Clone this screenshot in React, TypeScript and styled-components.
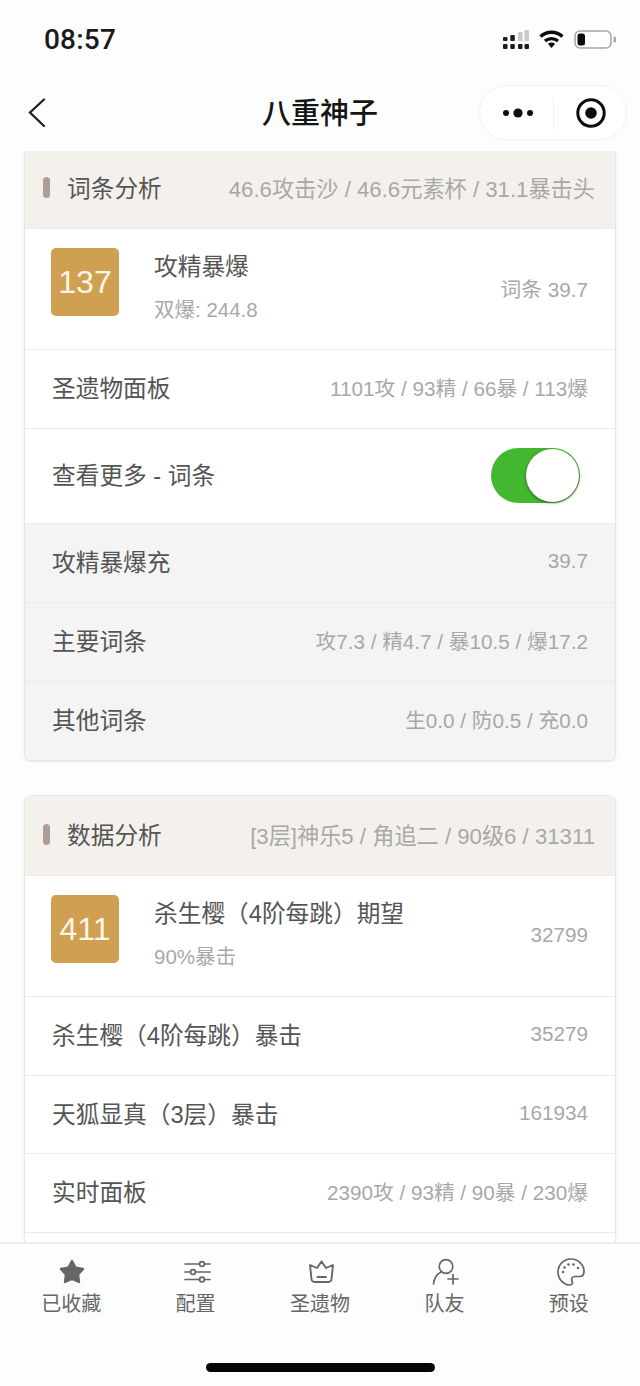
import React from "react";
import styled, { createGlobalStyle } from "styled-components";

const GlobalStyle = createGlobalStyle`
  html, body { margin: 0; padding: 0; background: #fdfdfd; }
  body { font-family: "Liberation Sans", "Noto Sans CJK SC", sans-serif; }
`;

const Screen = styled.div`
  width: 640px;
  height: 1386px;
  display: flex;
  flex-direction: column;
  overflow: hidden;
  background: #fdfdfd;
`;

const StatusBar = styled.div`
  height: 76px;
  flex: none;
  display: flex;
  align-items: center;
  justify-content: space-between;
  padding: 2px 0 0 44px;
  box-sizing: border-box;
`;

const Clock = styled.span`
  font-family: Roboto, sans-serif;
  font-size: 28px;
  font-weight: 500;
  color: #1a1a1a;
  letter-spacing: 0.2px;
`;

const StatusIcons = styled.div`
  display: flex;
  align-items: center;
  padding-right: 24px;
  gap: 10px;
`;

const NavBar = styled.div`
  height: 75px;
  flex: none;
  position: relative;
  display: flex;
  align-items: center;
  justify-content: space-between;
  padding: 0 13px 2px 24px;
  box-sizing: border-box;
`;

const NavTitle = styled.div`
  position: absolute;
  left: 0;
  right: 0;
  top: 17px;
  text-align: center;
  font-size: 29px;
  font-weight: 500;
  line-height: 42px;
  color: #151515;
`;

const Capsule = styled.div`
  width: 148px;
  height: 55px;
  box-sizing: border-box;
  border: 1px solid #f1f1f1;
  border-radius: 28px;
  background: #fff;
  display: flex;
  align-items: center;
  position: relative;
`;

const CapsuleHalf = styled.div`
  flex: 1 1 0;
  box-sizing: border-box;
  padding-left: 3px;
  display: flex;
  align-items: center;
  justify-content: center;
`;

const CapsuleDivider = styled.div`
  width: 1px;
  height: 32px;
  background: #eee;
`;

const Scroll = styled.div`
  flex: 1;
  min-height: 0;
  overflow: hidden;
  padding: 0 25px;
`;

const ScrollInner = styled.div`
  margin-top: -2px;
  display: flex;
  flex-direction: column;
  gap: 36px;
`;

const Card = styled.section`
  border-radius: 6px;
  background: #fff;
  box-shadow: 0 0 0 1px #e6e6e6, 0 1px 3px rgba(0, 0, 0, 0.18);
  overflow: hidden;
`;

const CardHeader = styled.header`
  height: 80px;
  box-sizing: border-box;
  background: #f4f1ed;
  border-bottom: 1px solid #eeeae6;
  display: flex;
  align-items: center;
  padding: 0 20px 4px 18px;
`;

const Marker = styled.span`
  width: 7px;
  height: 21px;
  border-radius: 4px;
  background: #b09d96;
  flex: none;
  margin: 2px 17px 0 0;
`;

const HeaderTitle = styled.span`
  font-size: 23.7px;
  color: #555;
  flex: none;
`;

const HeaderNote = styled.span`
  margin-left: auto;
  font-size: 22.2px;
  color: #a8a8a8;
  white-space: nowrap;
`;

const SummaryRow = styled.div`
  height: 121px;
  box-sizing: border-box;
  border-bottom: 1px solid #eee;
  display: flex;
  align-items: center;
  padding: 0 27px 4px 26px;
`;

const ScoreBadge = styled.div`
  width: 68px;
  height: 68px;
  border-radius: 5px;
  background: #cf9f52;
  color: #fdf6e6;
  font-size: 32px;
  display: flex;
  align-items: center;
  justify-content: center;
  flex: none;
  align-self: flex-start;
  margin: 19px 35px 0 0;
`;

const SummaryText = styled.div`
  display: flex;
  flex-direction: column;
  gap: 13px;
`;

const SummaryTitle = styled.span`
  font-size: 23.7px;
  line-height: 32px;
  color: #555;
`;

const SummarySub = styled.span`
  font-size: 20.5px;
  line-height: 28px;
  color: #a8a8a8;
`;

const Row = styled.div<{ $muted?: boolean; $height?: number }>`
  height: ${(p) => p.$height ?? 79}px;
  box-sizing: border-box;
  border-bottom: 1px solid #ececec;
  background: ${(p) => (p.$muted ? "#f4f4f4" : "#fff")};
  display: flex;
  align-items: center;
  justify-content: space-between;
  padding: 0 27px 4px;

  &:last-child {
    border-bottom: none;
  }
`;

const RowLabel = styled.span`
  font-size: 23.7px;
  color: #555;
`;

const RowValue = styled.span`
  font-size: 20.7px;
  color: #a8a8a8;
  white-space: nowrap;
`;

const SummaryValue = styled(RowValue)`
  margin-left: auto;
  position: relative;
  top: 1px;
`;

const Toggle = styled.div`
  width: 89px;
  height: 55px;
  border-radius: 28px;
  background: #43b72f;
  position: relative;
  margin: 2px 8px 0 0;
  flex: none;
`;

const ToggleKnob = styled.div`
  position: absolute;
  right: 1px;
  top: 1px;
  width: 53px;
  height: 53px;
  border-radius: 50%;
  background: #fff;
  box-shadow: 0 1px 3px rgba(0, 0, 0, 0.5);
`;

const TabBar = styled.nav`
  height: 144px;
  flex: none;
  box-sizing: border-box;
  border-top: 2px solid #ececec;
  background: #fdfdfd;
  position: relative;
  display: grid;
  grid-template-columns: repeat(5, 1fr);
  padding: 13px 9px 0;
  align-items: start;
`;

const Tab = styled.div`
  display: flex;
  flex-direction: column;
  align-items: center;
  gap: 1px;
`;

const TabIcon = styled.svg<{ $filled?: boolean }>`
  width: 32px;
  height: 32px;
  fill: ${(p) => (p.$filled ? "#666" : "none")};
  stroke: #666;
  stroke-width: 1.7;
  stroke-linecap: round;
  stroke-linejoin: round;
`;

const TabLabel = styled.span`
  font-size: 20px;
  line-height: 28px;
  color: #666;
`;

const HomeBar = styled.div`
  position: absolute;
  left: 206px;
  bottom: 14px;
  width: 229px;
  height: 9px;
  border-radius: 5px;
  background: #050505;
`;

const CellularIcon = () => (
  <svg width="26" height="19" viewBox="0 0 26 19">
    <g fill="#1c1c1c">
      <rect x="0" y="7" width="4.5" height="4" rx="1" />
      <rect x="7.3" y="5" width="4.5" height="6" rx="1" />
      <rect x="0" y="14" width="4.5" height="5" rx="1" />
      <rect x="7.3" y="14" width="4.5" height="5" rx="1" />
      <rect x="15" y="14" width="4.5" height="5" rx="1" />
      <rect x="21.5" y="14" width="4.5" height="5" rx="1" />
    </g>
    <rect x="15" y="2" width="4.5" height="9" rx="1" fill="#c8c8c8" />
    <rect x="21.5" y="0" width="4.5" height="11" rx="1" fill="#c8c8c8" />
  </svg>
);

const WifiIcon = () => (
  <svg width="25" height="18" viewBox="0 0 25 18" fill="none" stroke="#0c0c0c" strokeWidth="3.4">
    <path d="M1.5 6.5C7.5 .8 17.5 .8 23.5 6.5" />
    <path d="M6 11C9.8 7.8 15.2 7.8 19 11" />
    <path d="M12.5 18l-3.6-4.3C11 12.2 14 12.2 16.1 13.7z" fill="#0c0c0c" stroke="none" />
  </svg>
);

const BatteryIcon = () => (
  <svg width="42" height="19" viewBox="0 0 42 19">
    <rect x="1" y="1" width="36" height="17" rx="5" fill="#fff" stroke="#a8a8a8" strokeWidth="1.6" />
    <rect x="3.5" y="3.5" width="7.5" height="12" rx="2.5" fill="#0c0c0c" />
    <rect x="39.5" y="6.5" width="2.5" height="6" rx="1.2" fill="#aaa" />
  </svg>
);

const BackIcon = () => (
  <svg width="22" height="32" viewBox="0 0 22 32" fill="none" stroke="#222" strokeWidth="2.3" strokeLinecap="round">
    <path d="M20 2.5L6 15.5l14 13.5" />
  </svg>
);

const DotsIcon = () => (
  <svg width="34" height="12" viewBox="0 0 34 12" fill="#0c0c0c">
    <circle cx="5" cy="6" r="3" />
    <circle cx="17" cy="6" r="4.6" />
    <circle cx="29" cy="6" r="3" />
  </svg>
);

const TargetIcon = () => (
  <svg width="32" height="32" viewBox="0 0 32 32">
    <circle cx="16" cy="16" r="13.2" fill="none" stroke="#0c0c0c" strokeWidth="3" />
    <circle cx="16" cy="16" r="5.8" fill="#0c0c0c" />
  </svg>
);

const StarIcon = () => (
  <TabIcon viewBox="0 0 32 32" $filled>
    <path d="M17 4l3.6 6.6 7.4 1.4-5 5.5 1 7.5-7-3.2-7 3.2 1-7.5-5-5.5 7.4-1.4z" strokeWidth="2.4" />
  </TabIcon>
);

const SlidersIcon = () => (
  <TabIcon viewBox="0 0 32 32">
    <path d="M5 7h14.5M24.5 7H30M5 15h5.5M15.5 15H30M5 22.5h14.5M24.5 22.5H30" />
    <circle cx="22" cy="7" r="2.4" />
    <circle cx="13" cy="15" r="2.4" />
    <circle cx="22" cy="22.5" r="2.4" />
  </TabIcon>
);

const CrownIcon = () => (
  <TabIcon viewBox="0 0 32 32">
    <path d="M17.5 4.5L22 11l7-3-1.5 14a3 3 0 0 1-3 3H10.5a3 3 0 0 1-3-3L6 8l7 3z" strokeWidth="1.9" />
    <path d="M13.5 20h8.5" strokeWidth="2" />
  </TabIcon>
);

const AddFriendIcon = () => (
  <TabIcon viewBox="0 0 32 32">
    <circle cx="18" cy="9.5" r="6.8" />
    <path d="M13 15C8.5 17.5 6 21 5.5 27" />
    <path d="M20 22h10M25 17.5V27" />
  </TabIcon>
);

const PaletteIcon = () => (
  <TabIcon viewBox="0 0 32 32">
    <path d="M18 2C10.5 2 5 8 5 15c0 7 5.5 13 12 13 2.5 0 3-2 2-4-1-2.5.5-4.5 3-4.500h4.500c3 0 4.500-2 4.500-5C31 8 25.500 2 18 2z" />
    <g fill="#666" stroke="none">
      <circle cx="10" cy="15" r="1.3" />
      <circle cx="11.5" cy="10.5" r="1.3" />
      <circle cx="15.5" cy="7.5" r="1.3" />
      <circle cx="20.5" cy="7.5" r="1.3" />
      <circle cx="25" cy="11" r="1.3" />
    </g>
  </TabIcon>
);

const tabs = [
  { label: "已收藏", icon: <StarIcon /> },
  { label: "配置", icon: <SlidersIcon /> },
  { label: "圣遗物", icon: <CrownIcon /> },
  { label: "队友", icon: <AddFriendIcon /> },
  { label: "预设", icon: <PaletteIcon /> },
];

const App: React.FC = () => (
  <Screen>
    <GlobalStyle />
    <StatusBar>
      <Clock>08:57</Clock>
      <StatusIcons>
        <CellularIcon />
        <WifiIcon />
        <BatteryIcon />
      </StatusIcons>
    </StatusBar>
    <NavBar>
      <BackIcon />
      <NavTitle>八重神子</NavTitle>
      <Capsule>
        <CapsuleHalf>
          <DotsIcon />
        </CapsuleHalf>
        <CapsuleDivider />
        <CapsuleHalf>
          <TargetIcon />
        </CapsuleHalf>
      </Capsule>
    </NavBar>
    <Scroll>
      <ScrollInner>
        <Card>
          <CardHeader>
            <Marker />
            <HeaderTitle>词条分析</HeaderTitle>
            <HeaderNote>46.6攻击沙 / 46.6元素杯 / 31.1暴击头</HeaderNote>
          </CardHeader>
          <SummaryRow>
            <ScoreBadge>137</ScoreBadge>
            <SummaryText>
              <SummaryTitle>攻精暴爆</SummaryTitle>
              <SummarySub>双爆: 244.8</SummarySub>
            </SummaryText>
            <SummaryValue>词条 39.7</SummaryValue>
          </SummaryRow>
          <Row>
            <RowLabel>圣遗物面板</RowLabel>
            <RowValue>1101攻 / 93精 / 66暴 / 113爆</RowValue>
          </Row>
          <Row $height={95}>
            <RowLabel>查看更多 - 词条</RowLabel>
            <Toggle>
              <ToggleKnob />
            </Toggle>
          </Row>
          <Row $muted>
            <RowLabel>攻精暴爆充</RowLabel>
            <RowValue>39.7</RowValue>
          </Row>
          <Row $muted>
            <RowLabel>主要词条</RowLabel>
            <RowValue>攻7.3 / 精4.7 / 暴10.5 / 爆17.2</RowValue>
          </Row>
          <Row $muted $height={78}>
            <RowLabel>其他词条</RowLabel>
            <RowValue>生0.0 / 防0.5 / 充0.0</RowValue>
          </Row>
        </Card>
        <Card>
          <CardHeader>
            <Marker />
            <HeaderTitle>数据分析</HeaderTitle>
            <HeaderNote>[3层]神乐5 / 角追二 / 90级6 / 31311</HeaderNote>
          </CardHeader>
          <SummaryRow>
            <ScoreBadge>411</ScoreBadge>
            <SummaryText>
              <SummaryTitle>杀生樱（4阶每跳）期望</SummaryTitle>
              <SummarySub>90%暴击</SummarySub>
            </SummaryText>
            <SummaryValue>32799</SummaryValue>
          </SummaryRow>
          <Row>
            <RowLabel>杀生樱（4阶每跳）暴击</RowLabel>
            <RowValue>35279</RowValue>
          </Row>
          <Row $height={78}>
            <RowLabel>天狐显真（3层）暴击</RowLabel>
            <RowValue>161934</RowValue>
          </Row>
          <Row>
            <RowLabel>实时面板</RowLabel>
            <RowValue>2390攻 / 93精 / 90暴 / 230爆</RowValue>
          </Row>
          <Row />
        </Card>
      </ScrollInner>
    </Scroll>
    <TabBar>
      {tabs.map((tab) => (
        <Tab key={tab.label}>
          {tab.icon}
          <TabLabel>{tab.label}</TabLabel>
        </Tab>
      ))}
      <HomeBar />
    </TabBar>
  </Screen>
);

export default App;
